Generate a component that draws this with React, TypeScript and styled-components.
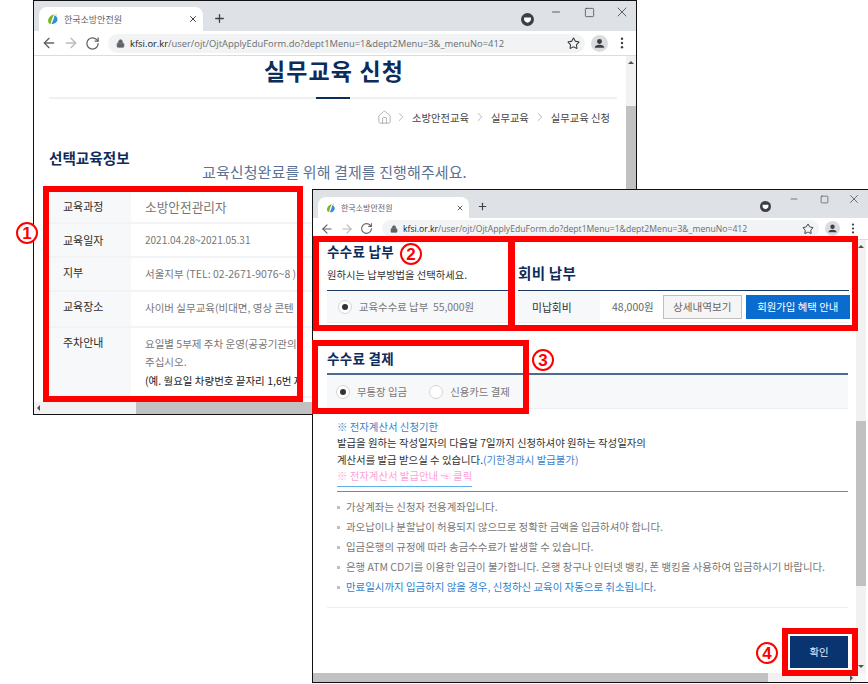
import React from "react";
import styled, { createGlobalStyle } from "styled-components";
import { ArrowLeft, ArrowRight, RotateCw, Lock, Star, X, Plus, Minus, Square, ChevronRight, Home } from "lucide-react";

const KR = `"Noto Sans CJK KR", "Noto Sans", sans-serif`;

const Global = createGlobalStyle`
  html, body { margin: 0; padding: 0; background: #fff; }
  body { font-family: ${KR}; }
  * { box-sizing: border-box; }
`;

const Desktop = styled.div`
  position: relative;
  width: 868px;
  height: 684px;
  overflow: hidden;
  background: #fff;
`;

const Win = styled.section<{ $x: number; $y: number; $w: number; $h: number; $open?: boolean }>`
  position: absolute;
  left: ${(p) => p.$x}px;
  top: ${(p) => p.$y}px;
  width: ${(p) => p.$w}px;
  height: ${(p) => p.$h}px;
  display: flex;
  flex-direction: column;
  background: #fff;
  border: 1px solid #111;
  ${(p) => (p.$open ? "border-right: none;" : "")}
`;

/* ---------- browser chrome ---------- */
const TabStrip = styled.div<{ $h: number; $pl: number }>`
  height: ${(p) => p.$h}px;
  flex: none;
  display: flex;
  align-items: flex-end;
  padding-left: ${(p) => p.$pl}px;
  background: #dee1e6;
`;
const Tab = styled.div<{ $w: number; $h: number; $fs: number }>`
  width: ${(p) => p.$w}px;
  height: ${(p) => p.$h}px;
  flex: none;
  display: flex;
  align-items: center;
  gap: 5px;
  padding: 0 5px 0 8px;
  background: #fff;
  border-radius: 8px 8px 0 0;
  font-size: ${(p) => p.$fs}px;
  color: #5f6368;
  svg { flex: none; }
`;
const TabTitle = styled.span`
  flex: 1;
  white-space: nowrap;
`;
const NewTab = styled.span<{ $ml: number; $mb: number }>`
  display: flex;
  margin-left: ${(p) => p.$ml}px;
  margin-bottom: ${(p) => p.$mb}px;
  color: #3c4043;
`;
const StripEnd = styled.div<{ $gap: number; $pr: number; $top: number }>`
  margin-left: auto;
  align-self: flex-start;
  display: flex;
  align-items: flex-start;
  gap: ${(p) => p.$gap}px;
  padding-right: ${(p) => p.$pr}px;
  padding-top: ${(p) => p.$top}px;
  color: #3c4043;
  svg { flex: none; }
`;
const WinButton = styled.span<{ $s: number }>`
  width: ${(p) => p.$s}px;
  height: ${(p) => p.$s}px;
  flex: none;
  display: flex;
  align-items: center;
  justify-content: center;
`;
const ProfileDot = styled.span<{ $mt: number; $mr: number }>`
  display: flex;
  margin-top: ${(p) => p.$mt}px;
  margin-right: ${(p) => p.$mr}px;
`;
const Toolbar = styled.div<{ $h: number; $pl: number; $gap: number }>`
  height: ${(p) => p.$h}px;
  flex: none;
  display: flex;
  align-items: center;
  gap: ${(p) => p.$gap}px;
  padding-left: ${(p) => p.$pl}px;
  background: #fff;
  border-bottom: 1px solid #dcdcdc;
  color: #5f6368;
  svg { flex: none; }
`;
const Omnibox = styled.div<{ $h: number; $w: number; $ml: number; $fs: number }>`
  width: ${(p) => p.$w}px;
  height: ${(p) => p.$h}px;
  margin-left: ${(p) => p.$ml}px;
  flex: none;
  display: flex;
  align-items: center;
  gap: 5.5px;
  padding: 0 5px 0 8px;
  background: #f1f3f4;
  border-radius: 10px;
  font-family: "Open Sans", sans-serif;
  font-size: ${(p) => p.$fs}px;
  color: #6a6e72;
  white-space: nowrap;
`;
const Host = styled.span`
  color: #202124;
`;
const Url = styled.span`
  flex: 1;
`;
const Avatar = styled.span<{ $s: number; $ml: number }>`
  width: ${(p) => p.$s}px;
  height: ${(p) => p.$s}px;
  margin-left: ${(p) => p.$ml}px;
  flex: none;
  display: flex;
`;
const Dots = styled.span<{ $ml: number }>`
  display: flex;
  margin-left: ${(p) => p.$ml}px;
`;

/* ---------- scrollbars ---------- */
const Viewport = styled.div<{ $pr?: number }>`
  flex: 1;
  min-height: 0;
  display: flex;
  padding-right: ${(p) => p.$pr ?? 0}px;
`;
const Page = styled.div`
  flex: 1;
  min-width: 0;
`;
const VBar = styled.div`
  width: 10px;
  flex: none;
  display: flex;
  flex-direction: column;
  align-items: stretch;
  background: #f1f1f1;
`;
const VSpace = styled.div<{ $h: number }>`
  height: ${(p) => p.$h}px;
  flex: none;
`;
const VFill = styled.div`
  flex: 1;
`;
const Thumb = styled.div<{ $h: number }>`
  height: ${(p) => p.$h}px;
  flex: none;
  background: #c1c1c1;
`;
const HBar = styled.div<{ $h: number; $pr?: number }>`
  height: ${(p) => p.$h}px;
  flex: none;
  display: flex;
  background: #f1f1f1;
  margin-right: ${(p) => p.$pr ?? 0}px;
`;
const HThumb = styled.div<{ $ml: number; $w: number }>`
  margin-left: ${(p) => p.$ml}px;
  width: ${(p) => p.$w}px;
  background: #c1c1c1;
`;
const HFill = styled.div`
  flex: 1;
`;
const Corner = styled.div`
  width: 10px;
  flex: none;
  background: #f8f8f8;
`;
const ArrowV = styled.div<{ $dir: "up" | "down" }>`
  margin: 5px auto;
  width: 0;
  height: 0;
  border-left: 3px solid transparent;
  border-right: 3px solid transparent;
  ${(p) => (p.$dir === "up" ? "border-bottom: 3px solid #505050;" : "border-top: 3px solid #505050;")}
`;
const ArrowH = styled.div<{ $dir: "left" | "right" }>`
  margin: auto 3px;
  width: 0;
  height: 0;
  border-top: 3px solid transparent;
  border-bottom: 3px solid transparent;
  ${(p) => (p.$dir === "left" ? "border-right: 3px solid #505050;" : "border-left: 3px solid #505050;")}
`;

/* ---------- window 1 page ---------- */
const PageInner1 = styled.div`
  padding: 0 0 0 15px;
  width: 591px;
`;
const PageTitle = styled.h1`
  margin: 0;
  height: 41px;
  text-align: center;
  font-size: 23px;
  line-height: 28px;
  font-weight: 700;
  color: #0c2c5c;
  padding-right: 6px;
  letter-spacing: 1.1px;
  white-space: nowrap;
`;
const TitleRule = styled.div`
  position: relative;
  height: 2px;
  margin-right: 8px;
  background: #f0f0f0;
  &::after {
    content: "";
    position: absolute;
    left: 267px;
    top: 0;
    width: 34px;
    height: 2px;
    background: #0c2c5c;
  }
`;
const Crumbs = styled.nav`
  display: flex;
  justify-content: flex-end;
  align-items: center;
  gap: 2px;
  height: 16px;
  margin: 10px 13px 0 0;
  font-size: 10.3px;
  color: #444;
  svg { color: #999; flex: none; }
  span { margin: 0 2px; }
`;
const SectionHead = styled.h3`
  margin: 23px 0 0;
  font-size: 14.6px;
  line-height: 20px;
  font-weight: 700;
  color: #0c2c5c;
`;
const Notice = styled.p`
  margin: -6px 0 0 153px;
  height: 22px;
  font-size: 15px;
  line-height: 20px;
  color: #5b7293;
  letter-spacing: 0.1px;
  white-space: nowrap;
`;
const InfoTable = styled.div`
  display: flex;
  flex-direction: column;
  margin-top: 4px;
`;
const InfoRow = styled.div<{ $h: number }>`
  display: grid;
  grid-template-columns: 82px 1fr;
  height: ${(p) => p.$h}px;
  border-bottom: 2px solid #f2f3f5;
`;
const InfoLabel = styled.div<{ $pt?: number }>`
  background: #f7f8fa;
  padding: ${(p) => p.$pt ?? 7}px 0 0 14px;
  font-size: 11px;
  line-height: 15px;
  color: #2b2b2b;
  white-space: nowrap;
`;
const InfoValue = styled.div<{ $fs?: number; $pt?: number }>`
  padding: ${(p) => p.$pt ?? 6.5}px 0 0 14px;
  font-size: ${(p) => p.$fs ?? 10.5}px;
  line-height: 18.5px;
  color: #777;
  white-space: nowrap;
`;
const Strong = styled.span`
  color: #222;
`;

/* ---------- window 2 page ---------- */
const PageInner2 = styled.div`
  padding: 0 0 0 14px;
  width: 543px;
`;
const FeeGrid = styled.div`
  display: grid;
  grid-template-columns: 183px 331px;
  column-gap: 8px;
`;
const FeeCol = styled.div`
  display: flex;
  flex-direction: column;
`;
const FeeTitle = styled.h3<{ $fs: number; $h: number; $pt: number }>`
  margin: 0;
  height: ${(p) => p.$h}px;
  padding-top: ${(p) => p.$pt}px;
  font-size: ${(p) => p.$fs}px;
  line-height: 18px;
  font-weight: 700;
  color: #0c2c5c;
  letter-spacing: 0.3px;
`;
const FeeHint = styled.p`
  margin: 0;
  height: 24px;
  padding-top: 1px;
  font-size: 10.3px;
  line-height: 16px;
  color: #333;
  white-space: nowrap;
`;
const BlueRule = styled.div<{ $t: number; $c: string }>`
  height: ${(p) => p.$t}px;
  background: ${(p) => p.$c};
  flex: none;
`;
const RadioRow = styled.div<{ $h: number; $gap: number; $pl: number }>`
  height: ${(p) => p.$h}px;
  display: flex;
  align-items: center;
  gap: ${(p) => p.$gap}px;
  padding-left: ${(p) => p.$pl}px;
  background: #f7f8fa;
  border-bottom: 1px solid #eceef0;
`;
const Option = styled.label`
  display: flex;
  align-items: center;
  gap: 7px;
  font-size: 10.4px;
  color: #777;
  white-space: nowrap;
`;
const Dot = styled.span<{ $on?: boolean }>`
  width: 14px;
  height: 14px;
  flex: none;
  border-radius: 50%;
  border: 1px solid #d5d5d5;
  background: #fff;
  display: flex;
  align-items: center;
  justify-content: center;
  &::after {
    content: "";
    width: 6px;
    height: 6px;
    border-radius: 50%;
    background: ${(p) => (p.$on ? "#333" : "transparent")};
  }
`;
const DuesRow = styled.div`
  height: 32px;
  display: grid;
  grid-template-columns: 82px 1fr;
  border-bottom: 1px solid #eceef0;
`;
const DuesLabel = styled.div`
  background: #f7f8fa;
  padding-left: 14px;
  display: flex;
  align-items: center;
  font-size: 10.8px;
  color: #333;
`;
const DuesValue = styled.div`
  display: flex;
  align-items: center;
  padding: 0 0 0 12px;
  font-size: 10.5px;
  color: #666;
  white-space: nowrap;
`;
const Ghost = styled.span`
  margin-left: 9px;
  width: 79px;
  height: 24px;
  display: flex;
  align-items: center;
  justify-content: center;
  background: #f5f5f5;
  border: 1px solid #bfbfbf;
  font-size: 10.6px;
  color: #666;
`;
const Primary = styled.span`
  margin-left: 4px;
  width: 104px;
  height: 24px;
  display: flex;
  align-items: center;
  justify-content: center;
  background: #0b6cd0;
  font-size: 10.4px;
  color: #fff;
`;
const PaySection = styled.div`
  margin-top: 26px;
  margin-right: 8px;
`;
const PayTitle = styled.h3`
  margin: 0;
  height: 24px;
  font-size: 13.5px;
  line-height: 18px;
  font-weight: 700;
  color: #0c2c5c;
  letter-spacing: 0.3px;
`;
const NoteBlock = styled.div`
  margin: 10px 8px 0 10px;
  font-size: 10.4px;
  line-height: 16.4px;
  color: #333;
  white-space: nowrap;
`;
const NoteLine = styled.div<{ $c?: string }>`
  height: 16.4px;
  color: ${(p) => p.$c ?? "#333"};
`;
const LinkBlue = styled.span`
  color: #3a82cc;
`;
const NoteUnder = styled.div`
  width: 135px;
  height: 1px;
  margin-top: 1px;
  background: #5fb0ee;
`;
const NoteRule = styled.div`
  height: 1px;
  margin-top: 4px;
  background: #7089a8;
`;
const Bullets = styled.ul`
  list-style: none;
  margin: 6px 0 0;
  padding: 0;
`;
const Bullet = styled.li<{ $blue?: boolean }>`
  display: flex;
  align-items: center;
  gap: 6px;
  height: 20px;
  font-size: 10.45px;
  color: ${(p) => (p.$blue ? "#2f7fcf" : "#777")};
  &::before {
    content: "";
    width: 3px;
    height: 3px;
    background: #c0c0c0;
    flex: none;
  }
`;
const BottomRule = styled.div`
  height: 1px;
  margin: 9px 8px 0 0;
  background: #eceef0;
`;
const ActionRow = styled.div`
  display: flex;
  justify-content: flex-end;
  margin: 28px 8px 0 0;
`;
const Confirm = styled.span`
  width: 58px;
  height: 32px;
  display: flex;
  align-items: center;
  justify-content: center;
  background: #0a3470;
  font-size: 10.4px;
  color: #e8eefc;
`;

/* ---------- annotations ---------- */
const RedBox = styled.div<{ $x: number; $y: number; $w: number; $h: number }>`
  position: absolute;
  left: ${(p) => p.$x}px;
  top: ${(p) => p.$y}px;
  width: ${(p) => p.$w}px;
  height: ${(p) => p.$h}px;
  border: 6px solid #ff0000;
  pointer-events: none;
`;
const Badge = styled.div<{ $x: number; $y: number }>`
  position: absolute;
  left: ${(p) => p.$x - 11}px;
  top: ${(p) => p.$y - 11}px;
  width: 22px;
  height: 22px;
  border: 2px solid #f00;
  border-radius: 50%;
  background: #fff;
  display: flex;
  align-items: center;
  justify-content: center;
  font-family: "Liberation Sans", sans-serif;
  font-size: 17px;
  font-weight: 700;
  line-height: 1;
  color: #f00;
`;

/* ---------- drawings ---------- */
const Leaf = ({ s }: { s: number }) => (
  <svg width={s} height={s} viewBox="0 0 16 16">
    <path d="M1.5 10.5 C1.5 6 5 3 9.5 1.5 C7.5 5 6 9 4.8 14.5 C3 14.3 1.5 12.8 1.5 10.5Z" fill="#7ab51d" />
    <path d="M10 3 C13.5 4.5 15 8 13.4 11 C11.5 14 8.5 15 6 14.5 C8 11 9.3 7 10 3Z" fill="#2f8fd8" />
    <path d="M11.5 0.8 C12.8 1.4 13.3 2.6 12.8 3.8 C11.6 3.3 11 2 11.5 0.8Z" fill="#f2c21a" />
  </svg>
);
const Incognito = ({ s }: { s: number }) => (
  <svg width={s} height={s} viewBox="0 0 16 16">
    <circle cx="8" cy="8" r="8" fill="#3c4043" />
    <path d="M3.8 5.6 H12.2 V8 C12.2 10 10 11.2 8 12 C6 11.2 3.8 10 3.8 8Z" fill="#fff" />
  </svg>
);
const Person = ({ s }: { s: number }) => (
  <svg width={s} height={s} viewBox="0 0 20 20">
    <circle cx="10" cy="10" r="10" fill="#dadce0" />
    <circle cx="10" cy="7.6" r="2.9" fill="#3c4043" />
    <path d="M4.5 15 C4.5 12.4 7.6 11.5 10 11.5 C12.4 11.5 15.5 12.4 15.5 15Z" fill="#3c4043" />
  </svg>
);
const VDots = ({ h }: { h: number }) => (
  <svg width={4} height={h} viewBox="0 0 4 14">
    <circle cx="2" cy="2" r="1.4" fill="#3c4043" />
    <circle cx="2" cy="7" r="1.4" fill="#3c4043" />
    <circle cx="2" cy="12" r="1.4" fill="#3c4043" />
  </svg>
);

type ChromeProps = {
  strip: number; tabH: number; tabW: number; tabPl: number; tabFs: number; leaf: number;
  plusMl: number; plusMb: number; plus: number;
  winGap: number; winPr: number; winTop: number; dotMt: number; dotMr: number; dot: number; win: number;
  toolH: number; toolPl: number; toolGap: number; nav: number;
  boxW: number; boxH: number; boxMl: number; urlFs: number; lock: number; star: number; avatar: number; avatarMl: number; dotsMl: number; dotsH: number;
};

const Chrome = (p: ChromeProps) => (
  <>
    <TabStrip $h={p.strip} $pl={p.tabPl}>
      <Tab $w={p.tabW} $h={p.tabH} $fs={p.tabFs}>
        <Leaf s={p.leaf} />
        <TabTitle>한국소방안전원</TabTitle>
        <X size={p.plus - 3} strokeWidth={2.4} color="#3c4043" />
      </Tab>
      <NewTab $ml={p.plusMl} $mb={p.plusMb}><Plus size={p.plus} strokeWidth={2.4} /></NewTab>
      <StripEnd $gap={p.winGap} $pr={p.winPr} $top={p.winTop}>
        <ProfileDot $mt={p.dotMt} $mr={p.dotMr}><Incognito s={p.dot} /></ProfileDot>
        <WinButton $s={p.win}><Minus size={p.win - 4} strokeWidth={1.6} /></WinButton>
        <WinButton $s={p.win}><Square size={p.win - 5} strokeWidth={1.6} /></WinButton>
        <WinButton $s={p.win}><X size={p.win} strokeWidth={1.2} /></WinButton>
      </StripEnd>
    </TabStrip>
    <Toolbar $h={p.toolH} $pl={p.toolPl} $gap={p.toolGap}>
      <ArrowLeft size={p.nav} strokeWidth={2} />
      <ArrowRight size={p.nav} strokeWidth={2} color="#b8babd" />
      <RotateCw size={p.nav - 1} strokeWidth={2} />
      <Omnibox $w={p.boxW} $h={p.boxH} $ml={p.boxMl} $fs={p.urlFs}>
        <Lock size={p.lock} fill="#5f6368" strokeWidth={2} />
        <Url><Host>kfsi.or.kr</Host>/user/ojt/OjtApplyEduForm.do?dept1Menu=1&amp;dept2Menu=3&amp;_menuNo=412</Url>
        <Star size={p.star} strokeWidth={2} color="#3c4043" />
      </Omnibox>
      <Avatar $s={p.avatar} $ml={p.avatarMl}><Person s={p.avatar} /></Avatar>
      <Dots $ml={p.dotsMl}><VDots h={p.dotsH} /></Dots>
    </Toolbar>
  </>
);

export default function App() {
  return (
    <Desktop>
      <Global />

      <Win $x={33} $y={0} $w={604} $h={415}>
        <Chrome strip={30} tabH={24} tabW={164} tabPl={5} tabFs={9} leaf={12}
          plusMl={10} plusMb={6} plus={13}
          winGap={17} winPr={6} winTop={3} dotMt={9} dotMr={-3} dot={13} win={16}
          toolH={25} toolPl={7} toolGap={6} nav={16}
          boxW={477} boxH={19} boxMl={1.5} urlFs={9.4} lock={9} star={13} avatar={17} avatarMl={0.5} dotsMl={5.5} dotsH={12} />
        <Viewport>
          <Page>
            <PageInner1>
              <PageTitle>실무교육 신청</PageTitle>
              <TitleRule />
              <Crumbs>
                <Home size={15} strokeWidth={1.2} />
                <ChevronRight size={14} strokeWidth={1.2} />
                <span>소방안전교육</span>
                <ChevronRight size={14} strokeWidth={1.2} />
                <span>실무교육</span>
                <ChevronRight size={14} strokeWidth={1.2} />
                <span>실무교육 신청</span>
              </Crumbs>
              <SectionHead>선택교육정보</SectionHead>
              <Notice>교육신청완료를 위해 결제를 진행해주세요.</Notice>
              <InfoTable>
                <InfoRow $h={36}>
                  <InfoLabel $pt={11}>교육과정</InfoLabel>
                  <InfoValue $fs={12.7} $pt={10}>소방안전관리자</InfoValue>
                </InfoRow>
                <InfoRow $h={34}>
                  <InfoLabel $pt={9}>교육일자</InfoLabel>
                  <InfoValue $fs={10}>2021.04.28~2021.05.31</InfoValue>
                </InfoRow>
                <InfoRow $h={34}>
                  <InfoLabel>지부</InfoLabel>
                  <InfoValue>서울지부 (TEL: 02-2671-9076~8 )</InfoValue>
                </InfoRow>
                <InfoRow $h={36}>
                  <InfoLabel>교육장소</InfoLabel>
                  <InfoValue>사이버 실무교육(비대면, 영상 콘텐</InfoValue>
                </InfoRow>
                <InfoRow $h={70}>
                  <InfoLabel>주차안내</InfoLabel>
                  <InfoValue>
                    요일별 5부제 주차 운영(공공기관의
                    <br />주십시오.
                    <br /><Strong>(예. 월요일 차량번호 끝자리 1,6번 제</Strong>
                  </InfoValue>
                </InfoRow>
              </InfoTable>
            </PageInner1>
          </Page>
          <VBar>
            <ArrowV $dir="up" />
            <VSpace $h={37} />
            <Thumb $h={300} />
          </VBar>
        </Viewport>
        <HBar $h={12}>
          <ArrowH $dir="left" />
          <HThumb $ml={93} $w={480} />
        </HBar>
      </Win>

      <Win $x={312} $y={189} $w={556} $h={494} $open>
        <Chrome strip={28} tabH={21} tabW={151} tabPl={5} tabFs={8} leaf={10}
          plusMl={8} plusMb={6} plus={11}
          winGap={16} winPr={7} winTop={2} dotMt={9} dotMr={0} dot={11} win={14}
          toolH={22} toolPl={7} toolGap={6} nav={14}
          boxW={437} boxH={17} boxMl={2.5} urlFs={8.65} lock={8} star={12} avatar={15} avatarMl={0.5} dotsMl={4.5} dotsH={11} />
        <Viewport $pr={2}>
          <Page>
            <PageInner2>
              <FeeGrid>
                <FeeCol>
                  <FeeTitle $fs={13.5} $h={26} $pt={2}>수수료 납부</FeeTitle>
                  <FeeHint>원하시는 납부방법을 선택하세요.</FeeHint>
                  <BlueRule $t={1} $c="#1b3a68" />
                  <RadioRow $h={32} $gap={0} $pl={11}>
                    <Option><Dot $on />교육수수료 납부&nbsp;&nbsp;55,000원</Option>
                  </RadioRow>
                </FeeCol>
                <FeeCol>
                  <FeeTitle $fs={14.5} $h={50} $pt={24}>회비 납부</FeeTitle>
                  <BlueRule $t={1} $c="#1b3a68" />
                  <DuesRow>
                    <DuesLabel>미납회비</DuesLabel>
                    <DuesValue>
                      48,000원
                      <Ghost>상세내역보기</Ghost>
                      <Primary>회원가입 혜택 안내</Primary>
                    </DuesValue>
                  </DuesRow>
                </FeeCol>
              </FeeGrid>
              <PaySection>
                <PayTitle>수수료 결제</PayTitle>
                <BlueRule $t={2} $c="#4e6a90" />
                <RadioRow $h={34} $gap={22} $pl={9}>
                  <Option><Dot $on />무통장 입금</Option>
                  <Option><Dot />신용카드 결제</Option>
                </RadioRow>
              </PaySection>
              <NoteBlock>
                <NoteLine $c="#3a82cc">※ 전자계산서 신청기한</NoteLine>
                <NoteLine>발급을 원하는 작성일자의 다음달 7일까지 신청하셔야 원하는 작성일자의</NoteLine>
                <NoteLine>계산서를 발급 받으실 수 있습니다.<LinkBlue>(기한경과시 발급불가)</LinkBlue></NoteLine>
                <NoteLine $c="#ff9fdc">※ 전자계산서 발급안내 ☜ 클릭</NoteLine>
                <NoteUnder />
                <NoteRule />
                <Bullets>
                  <Bullet>가상계좌는 신청자 전용계좌입니다.</Bullet>
                  <Bullet>과오납이나 분할납이 허용되지 않으므로 정확한 금액을 입금하셔야 합니다.</Bullet>
                  <Bullet>입금은행의 규정에 따라 송금수수료가 발생할 수 있습니다.</Bullet>
                  <Bullet>은행 ATM CD기를 이용한 입금이 불가합니다. 은행 창구나 인터넷 뱅킹, 폰 뱅킹을 사용하여 입금하시기 바랍니다.</Bullet>
                  <Bullet $blue>만료일시까지 입금하지 않을 경우, 신청하신 교육이 자동으로 취소됩니다.</Bullet>
                </Bullets>
              </NoteBlock>
              <BottomRule />
              <ActionRow><Confirm>확인</Confirm></ActionRow>
            </PageInner2>
          </Page>
          <VBar>
            <ArrowV $dir="up" />
            <VSpace $h={168} />
            <Thumb $h={165} />
            <VFill />
            <ArrowV $dir="down" />
          </VBar>
        </Viewport>
        <HBar $h={9} $pr={2}>
          <HThumb $ml={0} $w={455} />
          <HFill />
          <ArrowH $dir="right" />
          <Corner />
        </HBar>
      </Win>

      <RedBox $x={43} $y={186} $w={260} $h={216} />
      <RedBox $x={313} $y={236} $w={201} $h={95} />
      <RedBox $x={509} $y={236} $w={349} $h={95} />
      <RedBox $x={312} $y={340} $w={217} $h={74} />
      <RedBox $x={782} $y={628} $w={76} $h={48} />

      <Badge $x={27} $y={233}>1</Badge>
      <Badge $x={411} $y={254}>2</Badge>
      <Badge $x={543} $y={360}>3</Badge>
      <Badge $x={767} $y={653}>4</Badge>
    </Desktop>
  );
}
